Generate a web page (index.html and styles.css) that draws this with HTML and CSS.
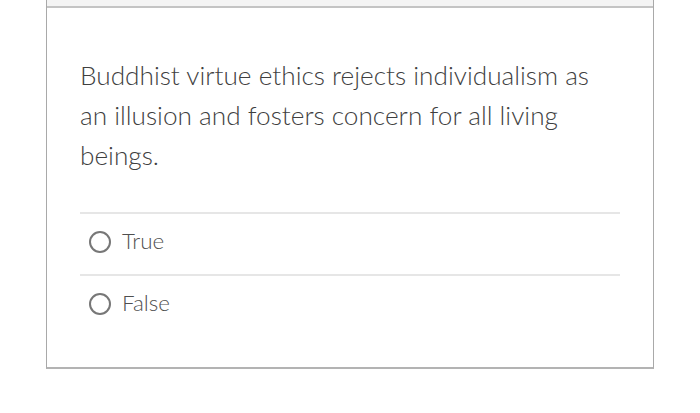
FILE: index.html
```html
<!DOCTYPE html>
<html>
<head>
<meta charset="utf-8">
<link rel="stylesheet" href="styles.css">
</head>
<body>
<div class="card">
  <div class="card-header"></div>
  <div class="card-body">
    <p class="question">Buddhist virtue ethics rejects individualism as an illusion and fosters concern for all living beings.</p>
    <ul class="answers">
      <li class="answer"><span class="radio"></span><span class="label">True</span></li>
      <li class="answer"><span class="radio"></span><span class="label">False</span></li>
    </ul>
  </div>
</div>
</body>
</html>
```
FILE: styles.css
```css
html, body {
  margin: 0;
  padding: 0;
  background: #ffffff;
}
body {
  font-family: Lato, "Noto Sans", sans-serif;
  font-weight: 300;
  color: #444;
}
.card {
  margin-left: 46px;
  width: 606px;
  border: 1px solid #a9a9a9;
  border-top: none;
  border-bottom-width: 2px;
  border-bottom-color: #b3b3b3;
}
.card-header {
  height: 6px;
  background: #f4f4f4;
  border-bottom: 2px solid #c4c4c4;
}
.card-body {
  padding: 47px 33px 31px 33px;
}
.question {
  margin: 0;
  font-size: 26.2px;
  line-height: 40px;
  color: #3f3f3f;
}
.answers {
  list-style: none;
  margin: 37px 0 0 0;
  padding: 0;
}
.answer {
  display: flex;
  align-items: center;
  height: 54px;
  padding-bottom: 6px;
  border-top: 2px solid #e6e6e6;
  padding-left: 9px;
  gap: 11px;
}
.radio {
  width: 18px;
  height: 18px;
  border: 2px solid #777;
  border-radius: 50%;
  flex: none;
  margin-top: 1px;
}
.label {
  font-size: 22.4px;
  line-height: 1;
  color: #4f4f4f;
}
```
